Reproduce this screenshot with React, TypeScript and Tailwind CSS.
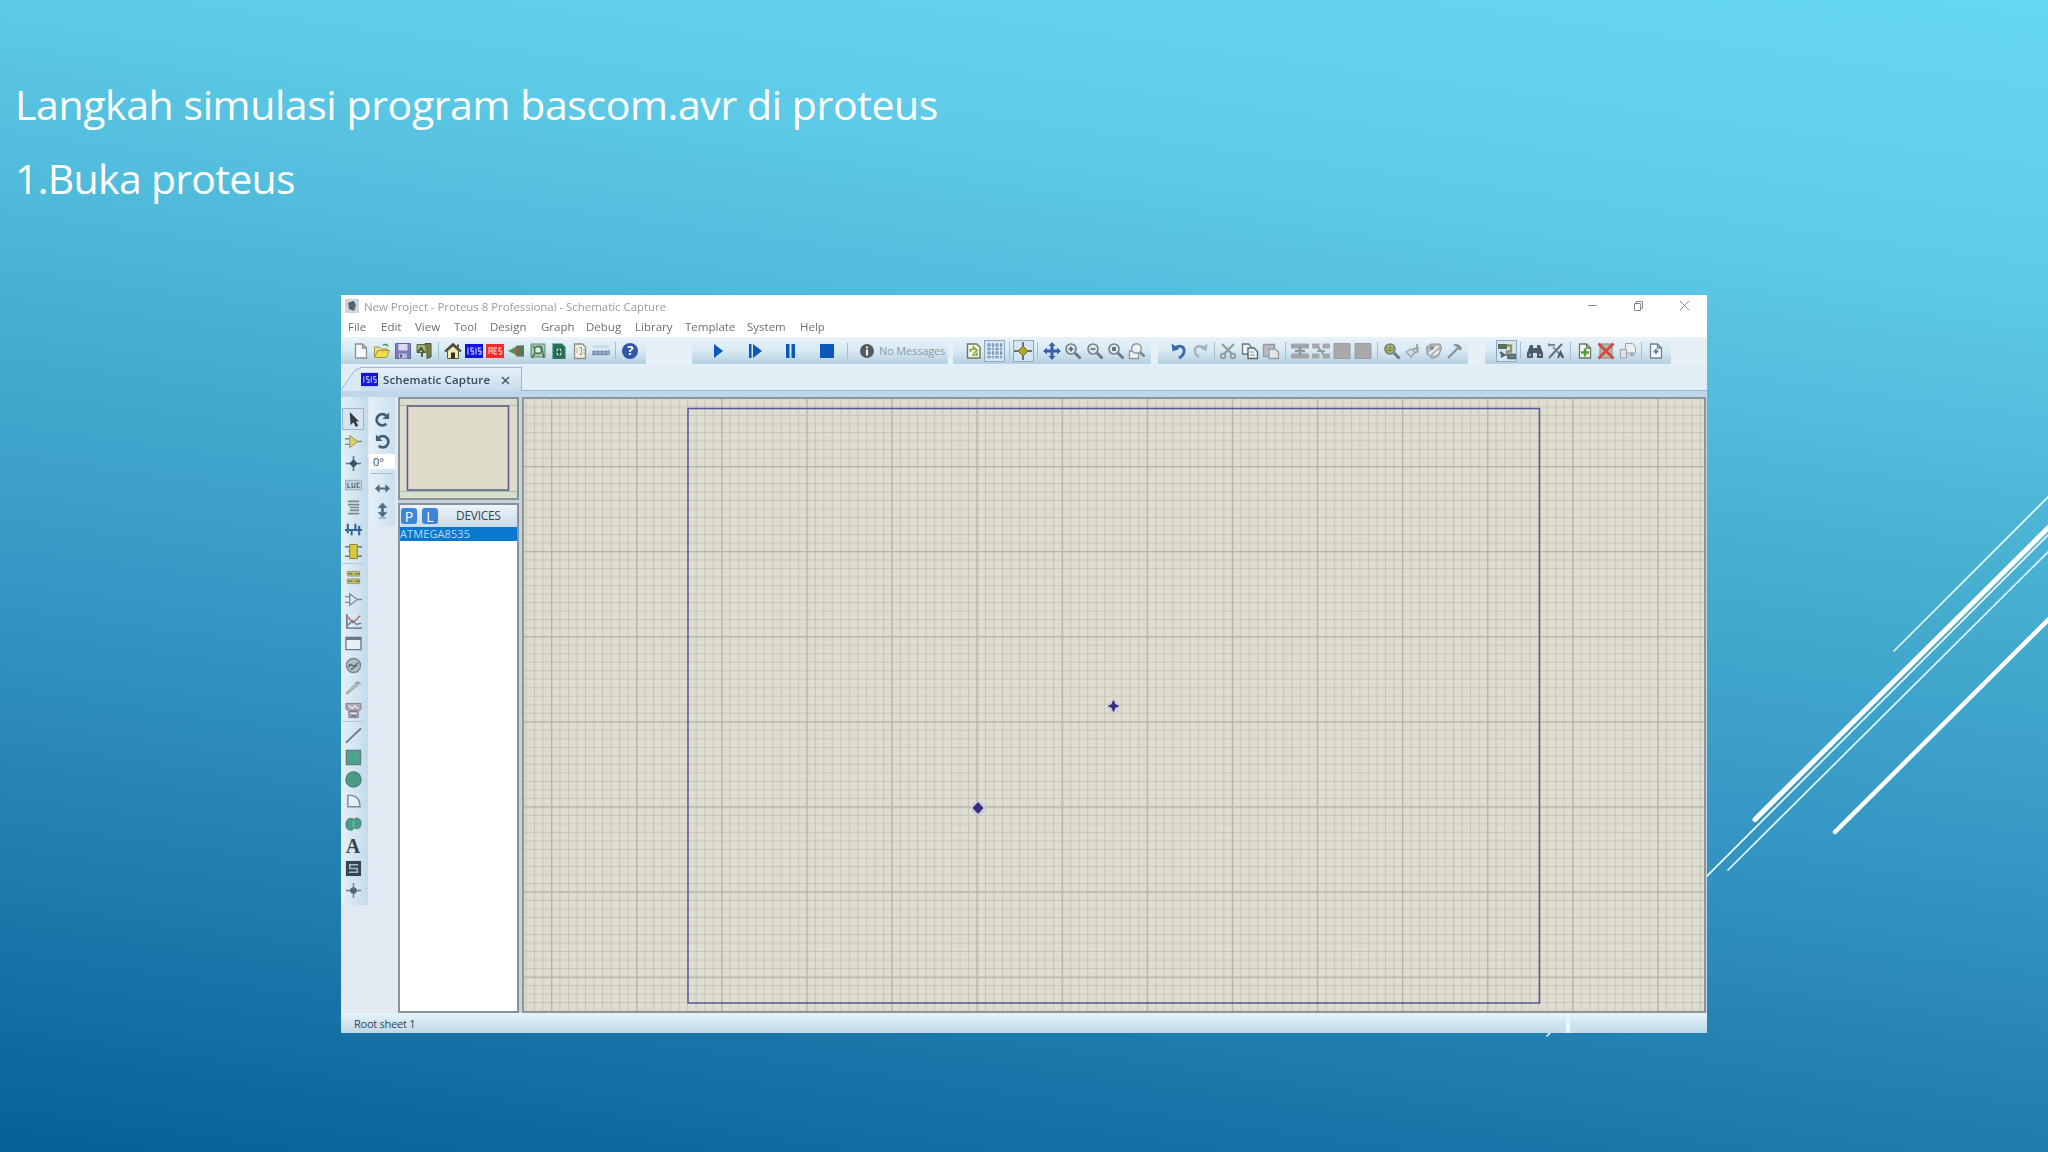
import type { ReactNode } from "react";
import { clsx } from "clsx";

const MENU = [
  { label: "File", width: "w-[33px]" },
  { label: "Edit", width: "w-[34px]" },
  { label: "View", width: "w-[39px]" },
  { label: "Tool", width: "w-[36px]" },
  { label: "Design", width: "w-[51px]" },
  { label: "Graph", width: "w-[45px]" },
  { label: "Debug", width: "w-[49px]" },
  { label: "Library", width: "w-[50px]" },
  { label: "Template", width: "w-[62px]" },
  { label: "System", width: "w-[53px]" },
  { label: "Help", width: "w-[40px]" },
];

function Svg({ children, size = 18 }: { children: ReactNode; size?: number }) {
  return (
    <svg width={size} height={size} viewBox="0 0 18 18" fill="none" className="shrink-0 blur-[0.4px]">
      {children}
    </svg>
  );
}

const Page = ({ stroke = "#8b8f94" }: { stroke?: string }) => (
  <path d="M3.5 2h7l4 4v10h-11z M10.5 2v4h4" fill="#f7f9fb" stroke={stroke} strokeWidth="1.3" />
);

const Lens = ({ fill = "#dfe9ee" }: { fill?: string }) => (
  <>
    <circle cx="7" cy="7" r="5" fill={fill} stroke="#77828b" strokeWidth="1.7" />
    <path d="M11 11l5.5 5.5" stroke="#6c767e" strokeWidth="2.8" />
  </>
);

const ICONS = {
  newFile: <Page />,
  open: (
    <>
      <path d="M1.5 15V5h5l2 2h6v3" fill="#eadf8e" stroke="#9c9440" />
      <path d="M1.5 15.5l3-7h12l-3 7z" fill="#f0dc4c" stroke="#a3963c" />
      <path d="M10 3.5c2-2 4-1 5 1" stroke="#4d8b55" strokeWidth="1.4" />
    </>
  ),
  save: (
    <>
      <path d="M1.5 1.5h15v15h-15z" fill="#7d7cb8" stroke="#6665a0" />
      <path d="M4.5 2h9v6.5h-9z" fill="#dcdcf0" />
      <path d="M5 11.5h8v5H5z" fill="#b9bbdc" />
      <path d="M6 12.5h2v3H6z" fill="#55558e" />
    </>
  ),
  exit: (
    <>
      <path d="M2 2.5h9v8H2z" fill="#a8b373" stroke="#59653d" />
      <path d="M10 1.5h6V15l-4 1.5V5z" fill="#77813d" stroke="#4b5630" />
      <path d="M3 10l3-4 3 4-2 1v4" stroke="#475a2d" strokeWidth="1.8" />
    </>
  ),
  home: (
    <>
      <path d="M3.5 9v7.5h11V9L9 4z" fill="#f1e9b4" stroke="#5b5537" />
      <path d="M1 9.5L9 2l8 7.5" stroke="#3c4130" strokeWidth="2" />
      <path d="M7 10.5h4v6H7z" fill="#37371f" />
      <path d="M13 2.5h2V6l-2-2z" fill="#474733" />
    </>
  ),
  ares: (
    <>
      <path d="M0 2h18v14H0z" fill="#f02c2c" />
      <path d="M3 12V6h3v6M3 9h3M8 12V6h3M8 9h2.5M8 12h3M15.5 6H13v3h2.5v3H13" stroke="#ffb5b0" strokeWidth="1.3" />
    </>
  ),
  isis: (
    <>
      <path d="M0 2h18v14H0z" fill="#1313da" />
      <path d="M3 5.5v7M8.5 6H6v3h2.5v3H6M11 5.5v7M16 6h-2.5v3H16v3h-2.5" stroke="#aab0ff" strokeWidth="1.3" />
    </>
  ),
  viewer3d: (
    <>
      <path d="M9 4.5L1 9l8 4z" fill="#4f9560" />
      <path d="M9 3.5h5v11H9z" fill="#7d6a55" />
      <path d="M12 4l5-1v12l-5-1z" fill="#4a7f5b" />
      <path d="M6 9l5-2v4z" fill="#c64f47" />
    </>
  ),
  gerber: (
    <>
      <path d="M2 2h14v13H2z" fill="#a9c8ae" stroke="#5f8a6a" />
      <circle cx="9" cy="8" r="3.5" fill="#deebe2" stroke="#3d7352" strokeWidth="1.4" />
      <path d="M6 11l-3 5M12 4l3 12M4 4l2 2" stroke="#3d7352" strokeWidth="1.5" />
    </>
  ),
  explorer: (
    <>
      <path d="M2.5 1.5H12L15.5 5v12h-13z" fill="#23785b" />
      <path d="M6 6h6v8H6z" fill="#bfe0d0" stroke="#0f4a36" />
      <path d="M9 7v6M7 10h4" stroke="#0f4a36" strokeWidth="1.5" />
    </>
  ),
  bom: (
    <>
      <path d="M3.5 2h8l3 3v11.5h-11z" fill="#f0ede3" stroke="#8d8c83" strokeWidth="1.3" />
      <path d="M8 5h3v8H8l2-2V7z" fill="#a3a095" />
      <path d="M5 7h2M5 10h2M12 8h2M12 11h2" stroke="#a9a79c" />
    </>
  ),
  code: (
    <>
      <path d="M1 4.5h16" stroke="#c2d3e3" strokeWidth="2" />
      <path d="M1 9.5h2v3H1zM5 9.5h2v3H5zM9 9.5h2v3H9zM13 9.5h2v3h-2zM17 8v5" stroke="#6a83a8" strokeWidth="1.3" />
    </>
  ),
  refresh: (
    <>
      <path d="M2.5 2h9L15 5v11H2.5z" fill="#f3f7ea" stroke="#6d7a4e" strokeWidth="1.4" />
      <path d="M5.5 10V7.5h3V5L12 8.500l-3.500 3M12 10.500V13H7" stroke="#7fa63c" strokeWidth="1.6" />
    </>
  ),
  grid: (
    <path
      d="M3 1v16M7 1v16M11 1v16M15 1v16M1 3h16M1 7h16M1 11h16M1 15h16"
      stroke="#5d7d9d"
      strokeWidth="1.2"
      strokeDasharray="1.6 1"
    />
  ),
  origin: (
    <>
      <path d="M9 0v18M0 9h18" stroke="#4d5130" strokeWidth="1.5" />
      <path d="M9 4l5 5-5 5-5-5z" fill="#b5a928" stroke="#6d6a25" />
    </>
  ),
  pan: <path d="M9 0l3.5 4h-2v3.5H14v-2L18 9l-4 3.5v-2h-3.5V14h2L9 18l-3.5-4h2v-3.5H4v2L0 9l4-3.5v2h3.5V4h-2z" fill="#3762ab" />,
  zoomIn: (
    <>
      <Lens />
      <path d="M7 4.5v5M4.5 7h5" stroke="#55616b" strokeWidth="1.5" />
    </>
  ),
  zoomOut: (
    <>
      <Lens />
      <path d="M4.5 7h5" stroke="#55616b" strokeWidth="1.5" />
    </>
  ),
  zoomAll: (
    <>
      <Lens />
      <path d="M5 5h4v4H5z" fill="#68737c" />
    </>
  ),
  zoomArea: (
    <>
      <path d="M1.5 9h9v7.5h-9z" fill="#f3f6f8" stroke="#8a949b" strokeWidth="1.3" />
      <circle cx="8.5" cy="6.5" r="4.8" fill="#ecf1f4" stroke="#8b959c" strokeWidth="1.4" />
      <path d="M12 10l4.5 4.5" stroke="#7b868e" strokeWidth="2.6" />
    </>
  ),
  undo: (
    <>
      <path d="M5 6c5-4 10-1 9 4-.5 3-3 5-5 6" stroke="#3a6ca9" strokeWidth="2.8" />
      <path d="M1.5 1.5l1 8 7-2.5z" fill="#3a6ca9" />
    </>
  ),
  redo: (
    <>
      <path d="M13 6C8 2 3 5 4 10c.5 2.5 2 4 4 5" stroke="#a7b4bd" strokeWidth="2.6" />
      <path d="M16.5 1.5l-1 8-6-3z" fill="#a7b4bd" />
    </>
  ),
  cut: (
    <>
      <path d="M3 2l10 10M15 2L5 12" stroke="#979da1" strokeWidth="2.4" />
      <circle cx="4" cy="14" r="2.3" stroke="#979da1" strokeWidth="2" />
      <circle cx="14" cy="14" r="2.3" stroke="#979da1" strokeWidth="2" />
    </>
  ),
  copy: (
    <>
      <path d="M1.5 2h6L10 4.500V12H1.500z" fill="#eef2f4" stroke="#68747c" strokeWidth="1.3" />
      <path d="M7 6h6l3.5 3.5v7H7z" fill="#eef2f4" stroke="#59656d" strokeWidth="1.4" />
      <path d="M9 10h4M9 13h5" stroke="#8a949b" />
    </>
  ),
  paste: (
    <>
      <path d="M1.5 2.5h11v12h-11z" fill="#b9bdc1" stroke="#95999d" strokeWidth="1.3" />
      <path d="M7 7h6l3.5 3v6.5H7z" fill="#e3e6e8" stroke="#999da1" strokeWidth="1.3" />
    </>
  ),
  block: (
    <>
      <path d="M0 1.5h18v5H0zM0 11.5h18v5H0z" fill="#a1a5a7" />
      <path d="M9 5v8M4 9h10" stroke="#90959a" strokeWidth="2.6" />
    </>
  ),
  blockMove: (
    <>
      <path d="M0 1.5h7.5v5H0zM10.5 1.5H18v5h-7.5zM0 11.5h7.5v5H0zM10.5 11.5H18v5h-7.5z" fill="#a5a9ab" />
      <path d="M5 9h8M6 5l6 8" stroke="#989da0" strokeWidth="2" />
    </>
  ),
  blockFill: <path d="M1 1.5h16v15H1z" fill="#a9a9aa" stroke="#9a9c9e" />,
  pick: (
    <>
      <Lens fill="#b7c06c" />
      <path d="M3 6h8M3 8.5h8M7 3v8" stroke="#7a8446" />
    </>
  ),
  makeDevice: (
    <>
      <path d="M2 10l5-3 4 3-4 5z" fill="#d3dade" stroke="#9ba4aa" strokeWidth="1.3" />
      <path d="M9 7l6-1M13 2v7M11 11l4-2" stroke="#9ba4aa" strokeWidth="1.8" />
    </>
  ),
  packaging: (
    <>
      <path d="M1.5 5L6 2h9l1.5 4-3 8-6 2.5L2 12z" fill="#b6b7ba" stroke="#909398" />
      <path d="M4 12L13 4M9 13l5-4" stroke="#f0f2f3" strokeWidth="2.2" />
      <circle cx="7" cy="6" r="2" fill="#8a8e92" />
    </>
  ),
  hammer: (
    <>
      <path d="M2 16L12 6" stroke="#8c959b" strokeWidth="2.4" />
      <path d="M7 3c3-2 6-1 9 3l-2 3-3-4z" fill="#868f95" />
    </>
  ),
  autoroute: (
    <>
      <path d="M0 2h9v5H0z" fill="#5c6f5d" />
      <path d="M9 3.5h4v6H9V13h7" stroke="#9a9463" strokeWidth="2.4" />
      <path d="M2 10l5 3-4 2M10 12.5h8v4h-8z" stroke="#4d646e" strokeWidth="1.5" fill="#6d857a" />
    </>
  ),
  binoculars: (
    <>
      <path d="M4 3h3v3h4V3h3l3 8v5h-6v-5H7v5H1v-5z" fill="#4e5a6e" />
      <path d="M3 12h2v2H3zM13 12h2v2h-2z" fill="#a6b4c5" />
    </>
  ),
  tools: (
    <>
      <path d="M1 3h7M2 1.5v3M6 5l9 10" stroke="#7e8992" strokeWidth="1.8" />
      <path d="M2 16L15 2" stroke="#66727c" strokeWidth="2" />
      <path d="M11 16l2.5-6 3 6" stroke="#4c5762" strokeWidth="1.8" />
    </>
  ),
  addSheet: (
    <>
      <Page stroke="#667a5a" />
      <path d="M9 6.5v8M5 10.5h8" stroke="#5a9a32" strokeWidth="2.6" />
    </>
  ),
  removeSheet: (
    <>
      <path d="M3 2h12v14H3z" fill="#c5b9a9" stroke="#8b8375" />
      <path d="M1.5 1.5l15 15M16.5 1.5l-15 15" stroke="#c94b43" strokeWidth="2.8" />
    </>
  ),
  parentSheet: (
    <>
      <path d="M6.5 1.5h7L16.5 5v6h-10z" fill="#eceff1" stroke="#9aa2a8" />
      <path d="M1.5 7.5h6V16h-6z" fill="#dee3e6" stroke="#9aa2a8" />
      <path d="M10 14l3-4 3 4z" fill="#a0a8ad" />
    </>
  ),
  report: (
    <>
      <Page stroke="#6f8190" />
      <path d="M9 7v5M6.5 9.5h5" stroke="#5c82ab" strokeWidth="1.8" />
    </>
  ),
  select: <path d="M5 1l1 14 3-3 2.5 5 2.5-1.5-2.500-4.500H15z" fill="#333a42" />,
  component: (
    <>
      <path d="M0 6h5M0 12h5M12 9h6" stroke="#6f8a74" strokeWidth="1.5" />
      <path d="M5 2.5v13L13.500 9z" fill="#d9cf62" stroke="#94975b" />
    </>
  ),
  junction: (
    <>
      <path d="M9 1v16M1 9h16" stroke="#66798c" strokeWidth="1.7" />
      <path d="M9 4.5L13.5 9 9 13.5 4.5 9z" fill="#38526d" />
    </>
  ),
  label: (
    <>
      <path d="M.5 3.5h17v10H.5z" fill="#c5d2de" stroke="#9aa9b8" />
      <path d="M3 6v5h2.5M7.5 6v5h3V6M15.5 6.5H13V11h2.5" stroke="#627689" strokeWidth="1.3" />
    </>
  ),
  script: <path d="M3 2.5h12M3 6h12M5 9h10M5 12h10M3 15.5h12" stroke="#7c8791" strokeWidth="1.7" />,
  bus: <path d="M0 9.5h18M3 3v6M7 9v6M11 3v6M15 9v6M15 5v4M3 9v4" stroke="#31679c" strokeWidth="2.2" />,
  subcircuit: (
    <>
      <path d="M0 4h18M0 14h18M4 9h10" stroke="#6b7a58" strokeWidth="1.5" />
      <path d="M5 1.5h8v15H5z" fill="#d8c93a" stroke="#7f7c3c" />
    </>
  ),
  terminal: (
    <>
      <path d="M2.5 2.5h13v5h-13zM2.5 10.5h13v5h-13z" fill="#c6bf55" stroke="#9ba080" />
      <path d="M3 5h5M3 13h5M11 5h5M11 13h5" stroke="#777c58" strokeWidth="1.5" />
    </>
  ),
  pin: <path d="M5 3v12l8-6zM0 6h5M0 12h5M13 9h5" stroke="#7b8998" strokeWidth="1.4" fill="#dde9f1" />,
  graph: (
    <>
      <path d="M2 1v15h16" stroke="#5c6674" strokeWidth="1.5" />
      <path d="M3 4l5 6 3-2 5-5" stroke="#b3656f" strokeWidth="1.5" />
      <path d="M3 13l5-5 4 4 5-1" stroke="#66708e" strokeWidth="1.3" />
    </>
  ),
  popup: (
    <>
      <path d="M1 2.5h16v13H1z" fill="#e8eff4" stroke="#6d7780" strokeWidth="1.4" />
      <path d="M1 4h16" stroke="#6d7780" strokeWidth="2.5" />
    </>
  ),
  generator: (
    <>
      <circle cx="9" cy="9" r="7.5" fill="#b2bcc3" stroke="#7a868f" strokeWidth="1.5" />
      <path d="M4 11c2-8 4 4 10-5M6 13c4 0 3-4 7-4" stroke="#5c6973" strokeWidth="1.7" />
    </>
  ),
  probe: (
    <>
      <path d="M1 15L10 6l2 2-9 7.500z" fill="#bcc9b8" stroke="#88938a" />
      <path d="M11 6c1-4 5-3 5 0M13 4v4" stroke="#8b9aa5" strokeWidth="1.4" />
    </>
  ),
  instrument: (
    <>
      <path d="M1 1.5h16v6l-3 2v7H4v-7l-3-2z" fill="#b0a8b7" stroke="#837b8c" />
      <path d="M4 4l4 3 2-3 4 3M6 12h6" stroke="#f1eef4" strokeWidth="1.3" />
      <path d="M5 9.5h8M6 14.5h6" stroke="#776f80" strokeWidth="1.5" />
    </>
  ),
  line: <path d="M1 16.5L17 1.5" stroke="#6a7987" strokeWidth="2" />,
  box: <path d="M1.5 1.5h15v15h-15z" fill="#4fa18b" stroke="#5c7f79" strokeWidth="1.4" />,
  circle: <circle cx="9" cy="9" r="8" fill="#4b9c87" stroke="#4b7c75" strokeWidth="1.4" />,
  arc: <path d="M3 2.5h4c6 1 9 6 9 12H3z" fill="#e5eef4" stroke="#7b8a96" strokeWidth="1.5" />,
  path: (
    <>
      <path d="M6 2.5c3 0 3 2 5 0 3-1 6 1 6 5 0 5-3 7-6 5.5-2-1-2 2.5-5 2-4 0-5-3-5-6s1-6 5-6.5z" fill="#4b9c87" stroke="#4b7c75" />
      <path d="M9 5v7" stroke="#80bfae" strokeWidth="1.5" />
    </>
  ),
  symbol: (
    <>
      <path d="M1 1h16v16H1z" fill="#34464f" />
      <path d="M14 5H5v4h8v4H4" stroke="#a9bcc3" strokeWidth="1.7" />
    </>
  ),
  marker: (
    <>
      <path d="M9 1v16M1 9h16" stroke="#73828d" strokeWidth="1.6" />
      <circle cx="9" cy="9" r="3.5" fill="#536975" />
    </>
  ),
  rotateCw: (
    <>
      <path d="M13 13.5A6 6 0 1 1 13 5" stroke="#455c78" strokeWidth="2.8" />
      <path d="M16 1.5v7H9z" fill="#455c78" />
    </>
  ),
  rotateCcw: (
    <>
      <path d="M5 13.5A6 6 0 1 0 5 5" stroke="#455c78" strokeWidth="2.8" />
      <path d="M2 1.5v7h7z" fill="#455c78" />
    </>
  ),
  flipH: <path d="M1 9l5-4.5V8h6V4.5L17 9l-5 4.5V10H6v3.500z" fill="#526a83" />,
  flipV: <path d="M9 1l4.5 5H10v5h3.500L9 16 4.500 11H8V6H4.500zM5 17h8" fill="#526a83" stroke="#526a83" strokeWidth="0.8" />,
} satisfies Record<string, ReactNode>;

type IconName = keyof typeof ICONS;

function Tool({ name, active }: { name: IconName; active?: boolean }) {
  return (
    <div className="flex h-[22px] w-[21.2px] shrink-0 items-center justify-center">
      <div
        className={clsx(
          "flex items-center justify-center",
          active && "h-[22px] w-[21px] shrink-0 border border-[#8eaac2] bg-[#d3e6f5]",
        )}
      >
        <Svg size={18}>{ICONS[name]}</Svg>
      </div>
    </div>
  );
}

const Sep = () => (
  <div className="flex w-[7.5px] shrink-0 justify-center">
    <div className="h-[17px] w-px bg-[#a9bccb]" />
  </div>
);

function Toolbar({ className, children }: { className: string; children: ReactNode }) {
  return (
    <div
      className={clsx(
        "flex h-[27px] shrink-0 items-center bg-linear-to-b from-[#e9f2f8] via-[#d8eaf4] to-[#b4cfdf]",
        className,
      )}
    >
      {children}
    </div>
  );
}

function TopToolbars() {
  return (
    <div className="flex h-[28px] bg-[#e7f0f7]">
      <Toolbar className="w-[305px] pl-[9px]">
        <Tool name="newFile" />
        <Tool name="open" />
        <Tool name="save" />
        <Tool name="exit" />
        <Sep />
        <Tool name="home" />
        <Tool name="isis" />
        <Tool name="ares" />
        <Tool name="viewer3d" />
        <Tool name="gerber" />
        <Tool name="explorer" />
        <Tool name="bom" />
        <Tool name="code" />
        <Sep />
        <div className="ml-[3px] flex size-4 items-center justify-center rounded-full bg-[#3156a8] text-[13px] font-bold text-white">
          ?
        </div>
      </Toolbar>
      <Toolbar className="ml-[46px] w-[256px]">
        <svg width="156" height="18" viewBox="0 0 156 18" fill="#0b58b8" className="blur-[0.4px]">
          <path d="M22 2v14l9-7z" />
          <path d="M57 2h2.5v14H57zM61 2v14l9-7z" />
          <path d="M94 2h3.5v14H94zM99.5 2h3.5v14h-3.5z" />
          <path d="M128 2h14v14h-14z" />
          <path d="M155 1h1v16h-1z" fill="#a9bccb" />
        </svg>
        <svg width="14" height="14" viewBox="0 0 14 14" className="ml-[12px] blur-[0.4px]">
          <circle cx="7" cy="7" r="7" fill="#57595c" />
          <path d="M7 2.5v2M7 5.5v6" stroke="#e8eef2" strokeWidth="2.2" />
        </svg>
        <span className="ml-[5px] text-[11px] tracking-[-0.15px] whitespace-nowrap text-[#8b9aa7]">No Messages</span>
      </Toolbar>
      <Toolbar className="ml-[5px] w-[198px] pl-[10px]">
        <Tool name="refresh" />
        <Tool name="grid" active />
        <Sep />
        <Tool name="origin" active />
        <Sep />
        <Tool name="pan" />
        <Tool name="zoomIn" />
        <Tool name="zoomOut" />
        <Tool name="zoomAll" />
        <Tool name="zoomArea" />
      </Toolbar>
      <Toolbar className="ml-[7px] w-[310px] pl-[10px]">
        <Tool name="undo" />
        <Tool name="redo" />
        <Sep />
        <Tool name="cut" />
        <Tool name="copy" />
        <Tool name="paste" />
        <Sep />
        <Tool name="block" />
        <Tool name="blockMove" />
        <Tool name="blockFill" />
        <Tool name="blockFill" />
        <Sep />
        <Tool name="pick" />
        <Tool name="makeDevice" />
        <Tool name="packaging" />
        <Tool name="hammer" />
      </Toolbar>
      <Toolbar className="ml-[17px] w-[186px] pl-[11px]">
        <Tool name="autoroute" active />
        <Sep />
        <Tool name="binoculars" />
        <Tool name="tools" />
        <Sep />
        <Tool name="addSheet" />
        <Tool name="removeSheet" />
        <Tool name="parentSheet" />
        <Sep />
        <Tool name="report" />
      </Toolbar>
    </div>
  );
}

const MODES: IconName[][] = [
  ["select", "component", "junction", "label", "script", "bus", "subcircuit"],
  ["terminal", "pin", "graph", "popup", "generator", "probe", "instrument"],
];
const SHAPES: IconName[] = ["line", "box", "circle", "arc", "path"];

function SideTool({ name }: { name: IconName }) {
  return (
    <div
      className={clsx(
        "flex h-[22.1px] w-[22px] items-center justify-center",
        name === "select" && "border border-[#9fb4c6] bg-[#d5e4ef]",
      )}
    >
      <Svg size={17}>{ICONS[name]}</Svg>
    </div>
  );
}

function SideBar() {
  return (
    <div className="flex w-[57px] shrink-0 items-start bg-[#e3e9f2]">
      <div className="flex h-[508px] w-[27px] flex-col items-center bg-linear-to-r from-[#e4f1f9] to-[#c3daea] pt-[11px] pr-[3px]">
        {MODES.map((group, i) => (
          <div key={i} className="mb-[2.5px] border-b border-[#b5c6d3]">
            {group.map((name) => (
              <SideTool key={name} name={name} />
            ))}
          </div>
        ))}
        {SHAPES.map((name) => (
          <SideTool key={name} name={name} />
        ))}
        <div className="h-[22px] font-['Liberation_Serif',serif] text-[20px] leading-[22px] font-bold text-[#36424c]">A</div>
        <SideTool name="symbol" />
        <SideTool name="marker" />
      </div>
      <div className="ml-px flex h-[129px] w-[26px] flex-col items-center bg-linear-to-r from-[#e4f1f9] to-[#cbdfed] pt-[11px]">
        <SideTool name="rotateCw" />
        <SideTool name="rotateCcw" />
        <div className="mt-px h-[15px] w-full bg-white pl-[4px] text-[11px] leading-[15px] text-[#414850]">0°</div>
        <div className="my-[4px] h-px w-[22px] bg-[#a9bccb]" />
        <SideTool name="flipH" />
        <SideTool name="flipV" />
      </div>
    </div>
  );
}

function DevicePanel() {
  return (
    <div className="flex w-[121px] shrink-0 flex-col">
      <div className="h-[103px] border-2 border-[#899299] bg-[#dbdccd]">
        <svg width="117" height="99" viewBox="0 0 117 99" fill="none">
          <path d="M0 6.5h117M0 92.5h117" stroke="#9cc49c" />
          <path d="M7.5 7h101v84h-101z" fill="#dfdccc" stroke="#56568a" strokeWidth="1.5" />
        </svg>
      </div>
      <div className="mt-[3px] flex flex-1 flex-col border-2 border-[#899299] bg-white">
        <div className="flex h-[22px] items-center gap-[5px] bg-linear-to-b from-[#eef4f9] to-[#c9dbe8] pl-px">
          <div className="flex size-4 items-center justify-center rounded-[3px] bg-[#3c85da] text-[14px] text-white">P</div>
          <div className="flex size-4 items-center justify-center rounded-[3px] bg-[#3c85da] text-[14px] text-white">L</div>
          <span className="ml-[13px] text-[12px] tracking-[-0.3px] text-[#3b444c]">DEVICES</span>
        </div>
        <div className="h-[14px] bg-[#0a78cf] text-[11px] leading-[14px] tracking-[0.1px] text-[#b5dcf8]">ATMEGA8535</div>
      </div>
    </div>
  );
}

// Origin of the 85.1px major grid, relative to the canvas.
const GRID_X = 28;
const GRID_Y = 68;

function Canvas() {
  return (
    <div className="ml-[3px] flex-1 overflow-hidden border-2 border-[#8d959a] bg-[#dfddd0]">
      <svg width="1181" height="612" viewBox="1 1 1181 612" fill="none">
        <defs>
          <pattern id="minor" x={GRID_X} y={GRID_Y} width="8.51" height="8.51" patternUnits="userSpaceOnUse">
            <path d="M0 .5h8.51M.5 0v8.51" stroke="#c6c6b8" strokeWidth="1.1" />
          </pattern>
          <pattern id="major" x={GRID_X} y={GRID_Y} width="85.1" height="85.1" patternUnits="userSpaceOnUse">
            <path d="M0 .7h85.1M.7 0v85.1" stroke="#b3b3a6" strokeWidth="1.3" />
          </pattern>
        </defs>
        <path d="M0 0h1184v616H0z" fill="url(#minor)" />
        <path d="M0 0h1184v616H0z" fill="url(#major)" />
        <path d="M165 10.5h851.5V605H165z" stroke="#5c559c" strokeWidth="1.5" />
        <g fill="#3b2c80">
          <circle cx="590.5" cy="309" r="6" fill="#d3cfe0" />
          <path d="M590.5 302.500l1.500 4 3.500 1.500-3.500 1.500-1.500 4-1.500-4-3.500-1.500 3.500-1.500z" stroke="#3b2c80" />
          <circle cx="455" cy="410" r="7" fill="#cfcbe0" />
          <path d="M455 404l5.500 6-5.500 6-5.500-6z" />
        </g>
      </svg>
    </div>
  );
}

function ProteusWindow() {
  return (
    <div className="relative flex h-[738px] w-[1366px] flex-col bg-white font-['Open_Sans',sans-serif]">
      <div className="flex h-[23px] items-center pr-[17px] pl-[4px]">
        <svg width="14" height="14" viewBox="0 0 14 14" className="blur-[0.4px]">
          <path d="M0 0h14v14H0z" fill="#cfd5d6" />
          <path d="M3 4l5-2 3 4-2 6-5-2z" fill="#57666b" />
          <path d="M7 3l3 1M4 8l4 2" stroke="#2d6a9c" strokeWidth="1.5" />
        </svg>
        <span className="ml-[5px] text-[11.5px] tracking-[-0.05px] whitespace-nowrap text-[#9b9b9b] blur-[0.3px]">
          New Project - Proteus 8 Professional - Schematic Capture
        </span>
        <svg width="102" height="12" viewBox="0 0 102 12" fill="none" stroke="#8b8b8b" className="-mt-px ml-auto">
          <path d="M0 5.5h9M46.5 3.5h6v7h-6zM48.5 3.5v-2h6v7h-2M92 1l9 9M101 1l-9 9" />
        </svg>
      </div>
      <div className="-mt-px mb-px flex h-[20px] items-center pl-[7px] text-[11.5px] text-[#6e6e6e] blur-[0.3px]">
        {MENU.map((m) => (
          <span key={m.label} className={clsx("shrink-0", m.width)}>
            {m.label}
          </span>
        ))}
      </div>
      <TopToolbars />
      <div className="flex h-[27px] items-end bg-[#e2eef5]">
        <div className="flex h-[24px] w-[181px] items-center">
          <svg width="20" height="24" viewBox="0 0 20 24">
            <path d="M0 24L14 3l6-2.500V24z" fill="#d9e8f4" />
            <path d="M0 23L14 3l6-2.500" fill="none" stroke="#9ab6d0" />
          </svg>
          <div className="flex h-full flex-1 items-center border-t border-r border-[#9ab6d0] bg-linear-to-b from-[#e6f0f8] to-[#c7dcee]">
            <Svg size={17}>{ICONS.isis}</Svg>
            <span className="ml-[5px] w-[113px] text-[11.5px] font-semibold tracking-[0.15px] whitespace-nowrap text-[#38495c] blur-[0.3px]">
              Schematic Capture
            </span>
            <svg width="9" height="9" viewBox="0 0 9 9" className="mt-[2px] ml-[5px]">
              <path d="M1 1l7 7M8 1L1 8" stroke="#4b5b6c" strokeWidth="1.5" />
            </svg>
          </div>
        </div>
        <div className="h-px flex-1 bg-[#9ab6d0]" />
      </div>
      <div className="h-[6px] bg-[#bfd5ea]" />
      <div className="flex flex-1 bg-[#c5d3df] pr-px">
        <SideBar />
        <DevicePanel />
        <Canvas />
      </div>
      <div className="flex h-[20px] items-center bg-linear-to-b from-[#e6f4fa] to-[#bdd9e7] pl-[13px] text-[11px] tracking-[-0.25px] text-[#3a4248]">
        <span className="pt-[2px]">Root sheet 1</span>
        <div className="mr-[137px] ml-auto h-full w-[4px] bg-[#eaf5fa]" />
      </div>
    </div>
  );
}

export default function App() {
  return (
    <div className="relative h-[1152px] w-[2048px] overflow-hidden bg-[linear-gradient(188deg,#66d7f2_0%,#5fcde9_18%,#46aed0_42%,#3697c4_60%,#1b78ab_83%,#075f98_100%)] font-['Open_Sans','Noto_Sans',sans-serif]">
      <svg className="absolute inset-0" width="2048" height="1152" fill="none" stroke="#fff" strokeLinecap="round">
        <path d="M1894 651L2050 495M1547 1036L2050 533M1728 870L2050 550" stroke="#e6f8fd" strokeWidth="1.7" />
        <path d="M1755 819.5L2052 524" strokeWidth="5" />
        <path d="M1835 832L2052 616" strokeWidth="4.5" />
      </svg>
      <div className="relative h-[295px] pt-[67px] pl-[15px] text-[41px] leading-[74px] text-white">
        <p className="tracking-[-0.4px] whitespace-nowrap">Langkah simulasi program bascom.avr di proteus</p>
        <p className="tracking-[-0.7px] whitespace-nowrap">1.Buka proteus</p>
      </div>
      <div className="pl-[341px]">
        <ProteusWindow />
      </div>
    </div>
  );
}
